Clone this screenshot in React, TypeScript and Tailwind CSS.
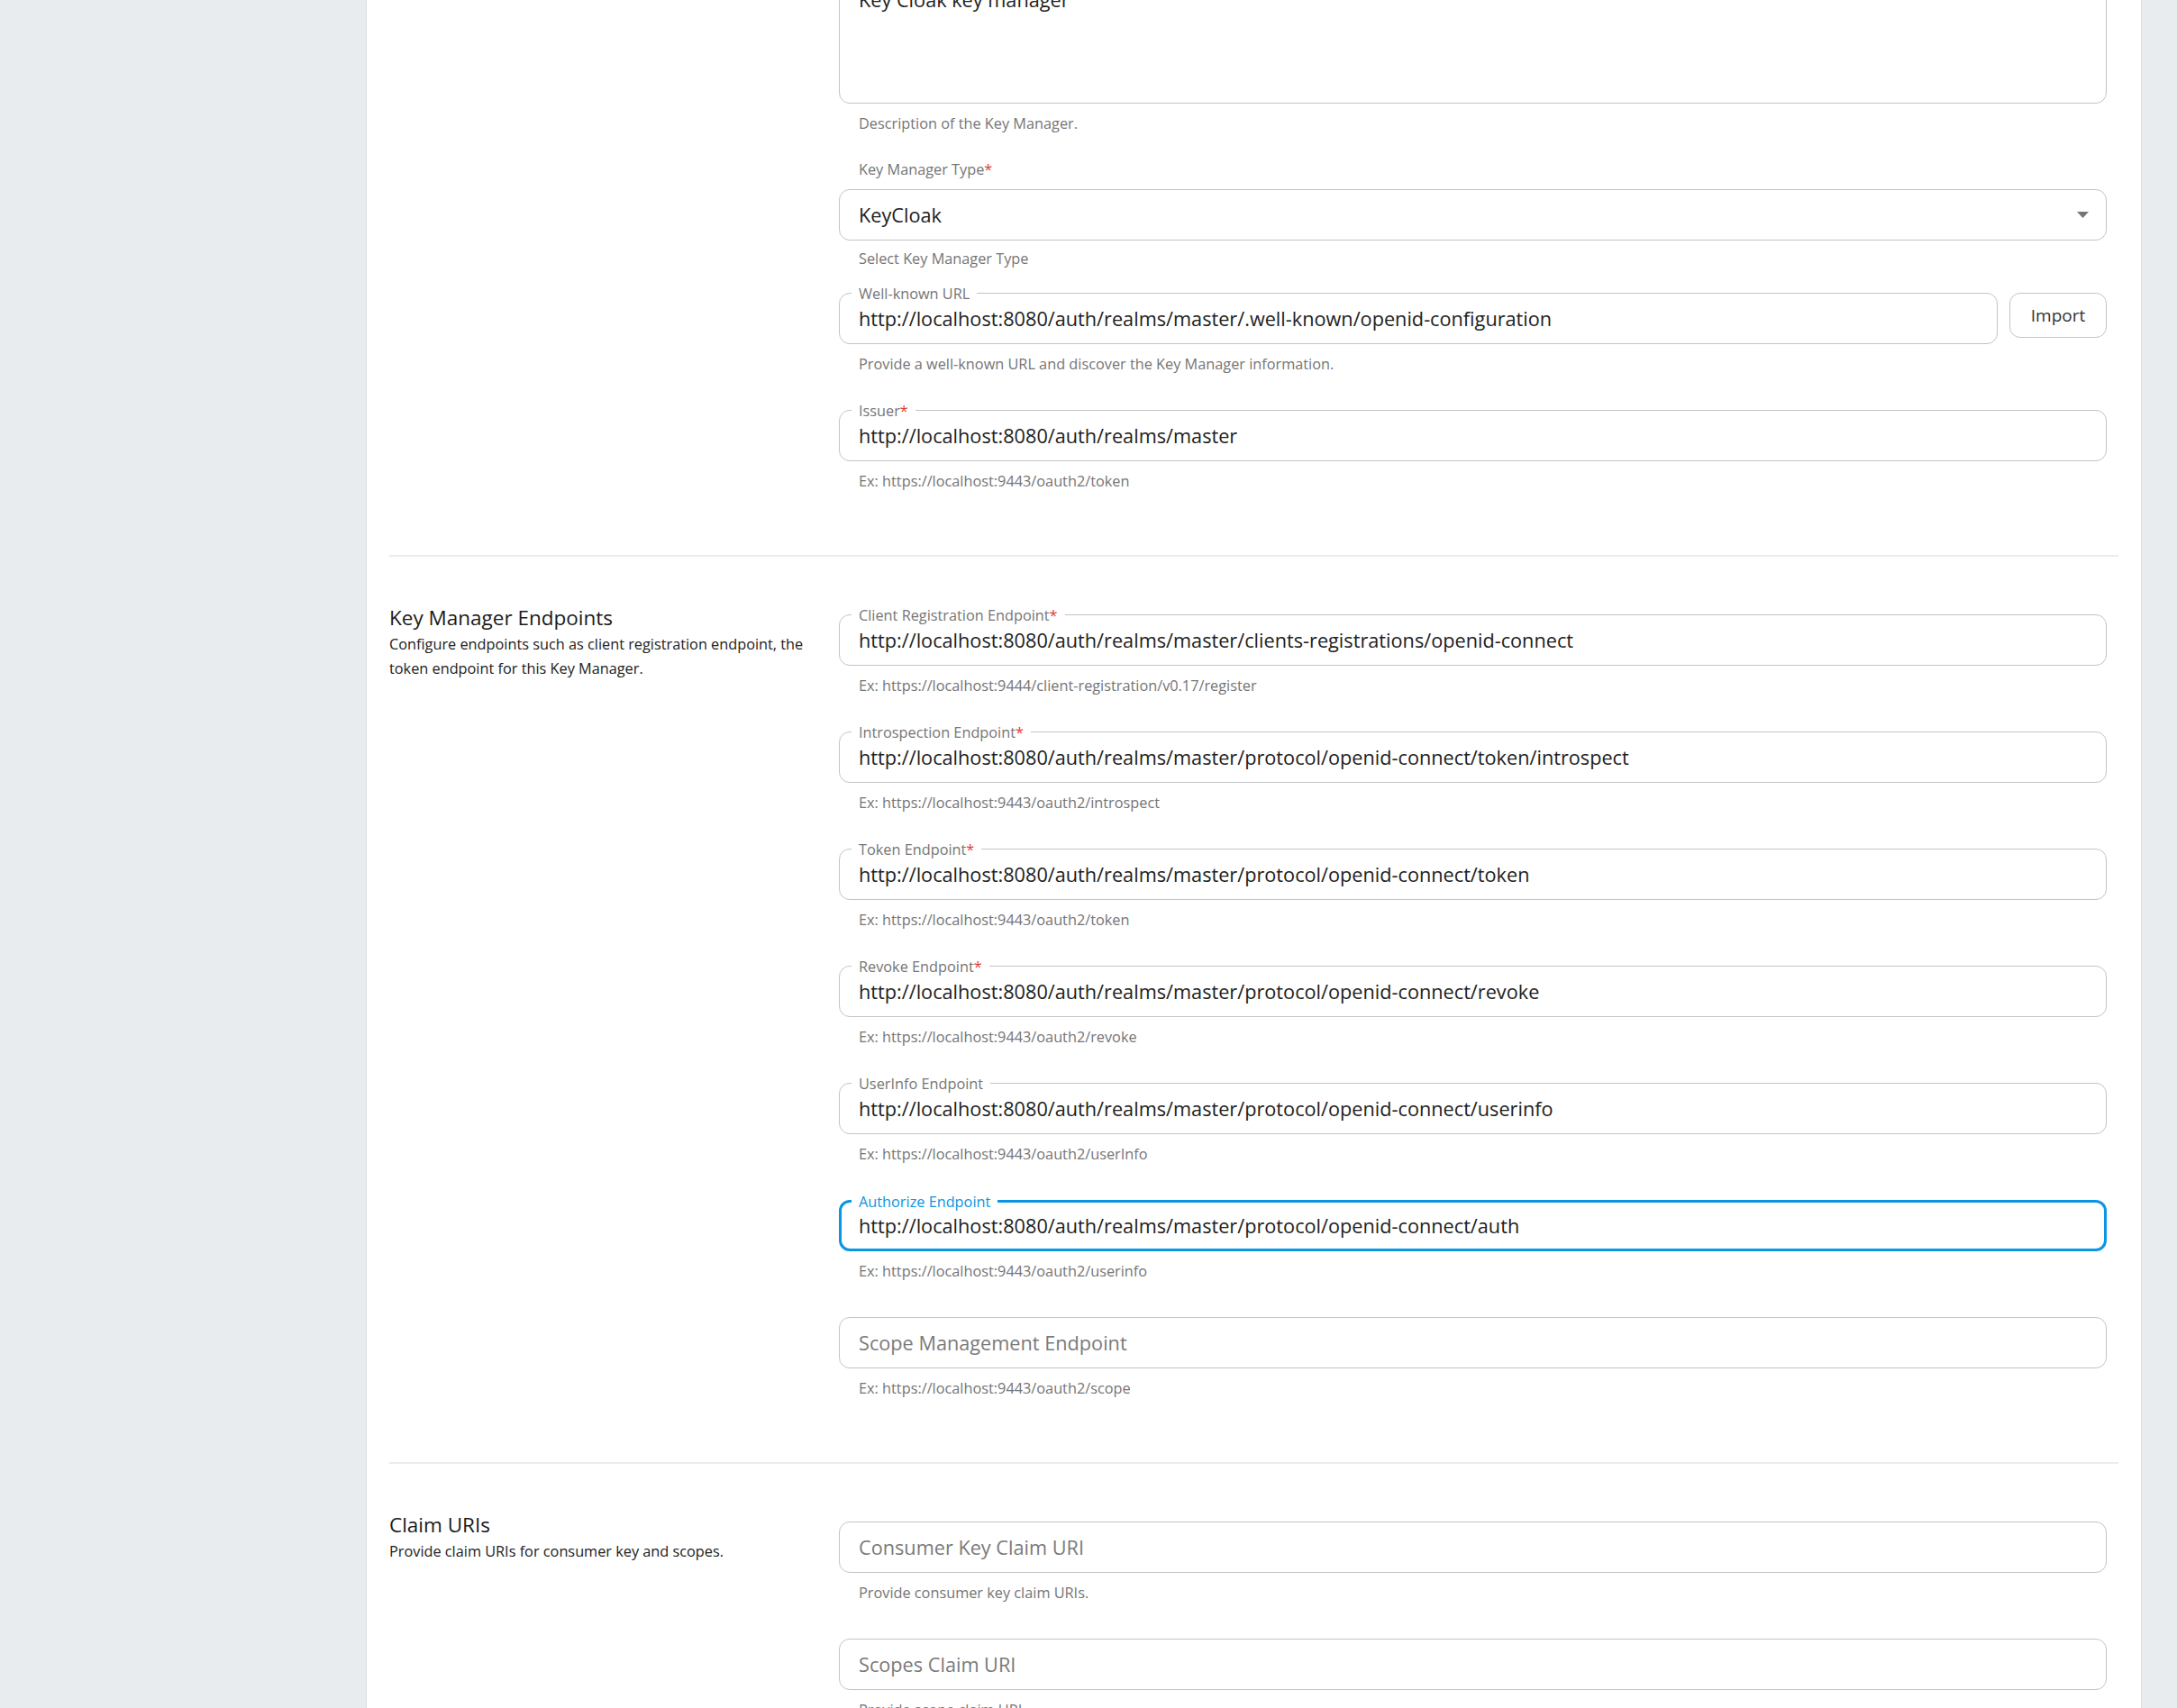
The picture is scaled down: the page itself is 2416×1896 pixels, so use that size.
import type { ReactNode } from "react";

interface FieldProps {
  label?: string;
  required?: boolean;
  value?: string;
  placeholder?: string;
  helper: string;
  focused?: boolean;
}

const ENDPOINTS: FieldProps[] = [
  {
    label: "Client Registration Endpoint",
    required: true,
    value:
      "http://localhost:8080/auth/realms/master/clients-registrations/openid-connect",
    helper: "Ex: https://localhost:9444/client-registration/v0.17/register",
  },
  {
    label: "Introspection Endpoint",
    required: true,
    value:
      "http://localhost:8080/auth/realms/master/protocol/openid-connect/token/introspect",
    helper: "Ex: https://localhost:9443/oauth2/introspect",
  },
  {
    label: "Token Endpoint",
    required: true,
    value: "http://localhost:8080/auth/realms/master/protocol/openid-connect/token",
    helper: "Ex: https://localhost:9443/oauth2/token",
  },
  {
    label: "Revoke Endpoint",
    required: true,
    value: "http://localhost:8080/auth/realms/master/protocol/openid-connect/revoke",
    helper: "Ex: https://localhost:9443/oauth2/revoke",
  },
  {
    label: "UserInfo Endpoint",
    value:
      "http://localhost:8080/auth/realms/master/protocol/openid-connect/userinfo",
    helper: "Ex: https://localhost:9443/oauth2/userInfo",
  },
  {
    label: "Authorize Endpoint",
    value: "http://localhost:8080/auth/realms/master/protocol/openid-connect/auth",
    helper: "Ex: https://localhost:9443/oauth2/userinfo",
    focused: true,
  },
  {
    placeholder: "Scope Management Endpoint",
    helper: "Ex: https://localhost:9443/oauth2/scope",
  },
];

const CLAIMS: FieldProps[] = [
  { placeholder: "Consumer Key Claim URI", helper: "Provide consumer key claim URIs." },
  { placeholder: "Scopes Claim URI", helper: "Provide scope claim URI." },
];

function Req() {
  return <span className="text-[#e53935]">*</span>;
}

function Helper({ children, className }: { children: ReactNode; className?: string }) {
  return (
    <div
      className={`pl-[22px] text-[16.3px] leading-[24px] text-[#757575] ${className ?? "mt-[10px]"}`}
    >
      {children}
    </div>
  );
}

function Box({
  label,
  required,
  value,
  placeholder,
  focused,
}: Omit<FieldProps, "helper">) {
  return (
    <div
      className={
        focused
          ? "relative flex h-[57px] items-center rounded-[12px] border-[3px] border-[#0a96e3] px-[19px]"
          : "relative flex h-[57px] items-center rounded-[12px] border border-[#c4c4c4] px-[21px]"
      }
    >
      {label && (
        <span
          className={
            focused
              ? "absolute left-[11px] top-[-1.5px] -translate-y-1/2 bg-white px-[8px] text-[16.3px] leading-[24px] text-[#0a96e3]"
              : "absolute left-[13px] top-[-0.5px] -translate-y-1/2 bg-white px-[8px] text-[16.3px] leading-[24px] text-[#757575]"
          }
        >
          {label}
          {required && <Req />}
        </span>
      )}
      {value ? (
        <span className="whitespace-nowrap text-[21.7px] leading-[30px] text-[#212121]">
          {value}
        </span>
      ) : (
        <span className="whitespace-nowrap text-[21.7px] leading-[30px] text-[#7a7a7a]">
          {placeholder}
        </span>
      )}
    </div>
  );
}

function Field(props: FieldProps) {
  return (
    <div className="mb-[39px]">
      <Box {...props} />
      <Helper>{props.helper}</Helper>
    </div>
  );
}

function Section({
  title,
  description,
  children,
}: {
  title?: string;
  description?: string;
  children: ReactNode;
}) {
  return (
    <div className="flex pb-[31px]">
      <div className="w-[499px] shrink-0 pr-[24px]">
        {title && (
          <div className="-mt-[13px]">
            <h2 className="text-[22.5px] font-medium leading-[33px] text-[#1a1a1a]">
              {title}
            </h2>
            <p className="text-[16.3px] leading-[26.7px] text-[#212121]">{description}</p>
          </div>
        )}
      </div>
      <div className="min-w-0 flex-1 pr-[13px]">{children}</div>
    </div>
  );
}

function Divider() {
  return <div className="h-[2px] bg-[#ececec]" />;
}

export default function App() {
  return (
    <div className="flex h-[1896px] overflow-hidden bg-[#e8ecef] font-['Open_Sans',sans-serif]">
      <div className="w-[406px] shrink-0" />
      <div className="w-[1971px] shrink-0 border-x border-[#d9dee1] bg-white px-[25px]">
        <div className="-mt-[41px]">
          <Section>
            <div className="relative h-[156px] rounded-[12px] border border-[#c4c4c4] px-[21px] pt-[25px]">
              <span className="absolute left-[13px] top-[-0.5px] -translate-y-1/2 bg-white px-[8px] text-[16.3px] leading-[24px] text-[#757575]">
                Description
              </span>
              <div className="text-[21.7px] leading-[30px] text-[#212121]">
                Key Cloak key manager
              </div>
            </div>
            <Helper>Description of the Key Manager.</Helper>

            <div className="mt-[27px] pl-[22px] text-[16.3px] leading-[24px] text-[#757575]">
              Key Manager Type
              <Req />
            </div>
            <div className="mt-[10px] flex h-[57px] items-center justify-between rounded-[12px] border border-[#c4c4c4] pl-[21px] pr-[19px]">
              <span className="text-[21.7px] leading-[30px] text-[#212121]">KeyCloak</span>
              <svg width="13" height="7" viewBox="0 0 13 7" className="text-[#757575]">
                <path d="M0 0h13L6.5 7z" fill="currentColor" />
              </svg>
            </div>
            <Helper className="mt-[8px]">Select Key Manager Type</Helper>

            <div className="mt-[26px] flex items-start gap-[13px]">
              <div className="min-w-0 flex-1">
                <Box
                  label="Well-known URL"
                  value="http://localhost:8080/auth/realms/master/.well-known/openid-configuration"
                />
                <Helper>Provide a well-known URL and discover the Key Manager information.</Helper>
              </div>
              <button
                type="button"
                className="flex h-[50px] w-[108px] shrink-0 items-center justify-center rounded-[12px] border border-[#c4c4c4] text-[19px] text-[#333333]"
              >
                Import
              </button>
            </div>

            <div className="mt-[39px]">
              <Field
                label="Issuer"
                required
                value="http://localhost:8080/auth/realms/master"
                helper="Ex: https://localhost:9443/oauth2/token"
              />
            </div>
          </Section>
        </div>

        <Divider />
        <div className="pt-[64px]">
          <Section
            title="Key Manager Endpoints"
            description="Configure endpoints such as client registration endpoint, the token endpoint for this Key Manager."
          >
            {ENDPOINTS.map((f) => (
              <Field key={f.helper + (f.label ?? f.placeholder)} {...f} />
            ))}
          </Section>
        </div>

        <Divider />
        <div className="pt-[64px]">
          <Section
            title="Claim URIs"
            description="Provide claim URIs for consumer key and scopes."
          >
            {CLAIMS.map((f) => (
              <Field key={f.placeholder} {...f} />
            ))}
          </Section>
        </div>
      </div>
    </div>
  );
}
